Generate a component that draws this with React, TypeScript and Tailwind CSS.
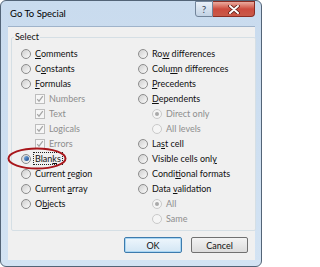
import React from "react";

type Item = {
  label: React.ReactNode;
  kind: "radio" | "check";
  sub?: boolean;
  disabled?: boolean;
  checked?: boolean;
  focus?: boolean;
};

const u = (s: string) => <span className="underline underline-offset-[1px]">{s}</span>;

const left: Item[] = [
  { label: <>{u("C")}omments</>, kind: "radio" },
  { label: <>C{u("o")}nstants</>, kind: "radio" },
  { label: <>{u("F")}ormulas</>, kind: "radio" },
  { label: "Numbers", kind: "check", sub: true, disabled: true, checked: true },
  { label: "Text", kind: "check", sub: true, disabled: true, checked: true },
  { label: "Logicals", kind: "check", sub: true, disabled: true, checked: true },
  { label: "Errors", kind: "check", sub: true, disabled: true, checked: true },
  { label: <>Blan{u("k")}s</>, kind: "radio", checked: true, focus: true },
  { label: <>Current {u("r")}egion</>, kind: "radio" },
  { label: <>Current {u("a")}rray</>, kind: "radio" },
  { label: <>O{u("b")}jects</>, kind: "radio" },
];

const right: Item[] = [
  { label: <>Ro{u("w")} differences</>, kind: "radio" },
  { label: <>Colu{u("m")}n differences</>, kind: "radio" },
  { label: <>{u("P")}recedents</>, kind: "radio" },
  { label: <>{u("D")}ependents</>, kind: "radio" },
  { label: "Direct only", kind: "radio", sub: true, disabled: true, checked: true },
  { label: "All levels", kind: "radio", sub: true, disabled: true },
  { label: <>La{u("s")}t cell</>, kind: "radio" },
  { label: <>Visible cells onl{u("y")}</>, kind: "radio" },
  { label: <>Condi{u("t")}ional formats</>, kind: "radio" },
  { label: <>Data {u("v")}alidation</>, kind: "radio" },
  { label: "All", kind: "radio", sub: true, disabled: true, checked: true },
  { label: "Same", kind: "radio", sub: true, disabled: true },
];

function Radio({ checked, disabled }: { checked?: boolean; disabled?: boolean }) {
  return (
    <span
      className={
        disabled
          ? "w-[10px] h-[10px] shrink-0 rounded-full border border-[#c9c9c9] bg-[#f5f5f5] flex items-center justify-center"
          : "w-[10px] h-[10px] shrink-0 rounded-full border border-[#8c8c8c] bg-gradient-to-br from-[#cfcfcf] to-[#fbfbfb] flex items-center justify-center"
      }
    >
      {checked &&
        (disabled ? (
          <span className="w-[4px] h-[4px] rounded-full bg-[#a9a9a9]" />
        ) : (
          <span className="w-[5px] h-[5px] rounded-full bg-gradient-to-br from-[#7fb2e6] to-[#17478a]" />
        ))}
    </span>
  );
}

function Check() {
  return (
    <span className="w-[10px] h-[10px] shrink-0 border border-[#bdbdbd] bg-[#f6f6f6] flex items-center justify-center">
      <svg width="8" height="8" viewBox="0 0 8 8">
        <path d="M1.2 4.2 L3 6.2 L6.8 1.2" fill="none" stroke="#a5a5a5" strokeWidth="1.2" />
      </svg>
    </span>
  );
}

function Row({ item }: { item: Item }) {
  return (
    <div className={`h-[15px] flex items-center gap-[4px] ${item.sub ? "pl-[14px]" : ""}`}>
      {item.kind === "radio" ? (
        <Radio checked={item.checked} disabled={item.disabled} />
      ) : (
        <Check />
      )}
      <span
        className={`${item.disabled ? "text-[#8e8e8e]" : "text-[#111]"} ${
          item.focus ? "-ml-[2px] px-[1px] border border-dotted border-[#222] leading-[11px]" : ""
        } whitespace-nowrap`}
      >
        {item.label}
      </span>
    </div>
  );
}

export default function App() {
  return (
    <div className="relative w-[262px] h-[267px] bg-white text-[9px] font-['Lato',sans-serif]">
      <div className="w-full h-full rounded-[6px] border border-[#536477] bg-gradient-to-b from-[#c9dbee] to-[#d3e3f3] flex flex-col pl-[7px] pr-[6px] pb-[6px]">
        {/* Title bar */}
        <div className="h-[25px] flex items-start">
          <span className="ml-[2px] mt-[7px] text-[9.5px] text-black leading-[12px]">Go To Special</span>
          <div className="ml-auto flex">
            <div className="w-[18px] h-[16px] border border-[#72849a] rounded-bl-[3px] bg-gradient-to-b from-[#e9f0f8] to-[#c2d2e4] flex items-center justify-center text-[10px] leading-none text-[#3b4b5c]">
              ?
            </div>
            <div className="w-[42px] h-[16px] border border-[#8b2c22] border-l-0 rounded-br-[4px] bg-gradient-to-b from-[#e9aba0] via-[#cc4b3e] to-[#c95a49] flex items-center justify-center">
              <svg width="12" height="9" viewBox="0 0 12 9">
                <path d="M2 1 L10 8 M10 1 L2 8" stroke="#5a1b14" strokeWidth="3.6" strokeLinecap="round" />
                <path d="M2 1 L10 8 M10 1 L2 8" stroke="#ffffff" strokeWidth="2" strokeLinecap="round" />
              </svg>
            </div>
          </div>
        </div>

        {/* Client area */}
        <div className="flex-1 bg-[#f0f0f0] border-t border-[#9fb3ca] flex flex-col">
          <fieldset className="mt-[4px] ml-[3px] mr-[4px] border border-[#d5dfe5] rounded-[2px] pl-[9px] pt-[3px] pb-[4px]">
            <legend className="ml-[-7px] px-[1px] leading-[12px] text-[#111]">Select</legend>
            <div className="grid grid-cols-[117px_117px]">
              <div className="flex flex-col">
                {left.map((it, i) => (
                  <Row key={i} item={it} />
                ))}
              </div>
              <div className="flex flex-col">
                {right.map((it, i) => (
                  <Row key={i} item={it} />
                ))}
              </div>
            </div>
          </fieldset>
          <div className="mt-auto mb-[7px] flex justify-end gap-[9px] pr-[7px]">
            <button className="w-[58px] h-[16px] rounded-[2px] border border-[#3d7bad] bg-gradient-to-b from-[#eef6fc] to-[#d3e6f4] shadow-[inset_0_0_0_1px_#a9d6f3] text-[#111] leading-none">
              OK
            </button>
            <button className="w-[57px] h-[16px] rounded-[2px] border border-[#707070] bg-gradient-to-b from-[#f3f3f3] to-[#dcdcdc] text-[#111] leading-none">
              Cancel
            </button>
          </div>
        </div>
      </div>

      {/* Red annotation ring around Blanks */}
      <svg className="absolute left-[7px] top-[147px]" width="60" height="23" viewBox="0 0 60 23">
        <ellipse cx="30" cy="11.5" rx="28.5" ry="10" fill="none" stroke="#a8161b" strokeWidth="2" />
      </svg>
    </div>
  );
}
